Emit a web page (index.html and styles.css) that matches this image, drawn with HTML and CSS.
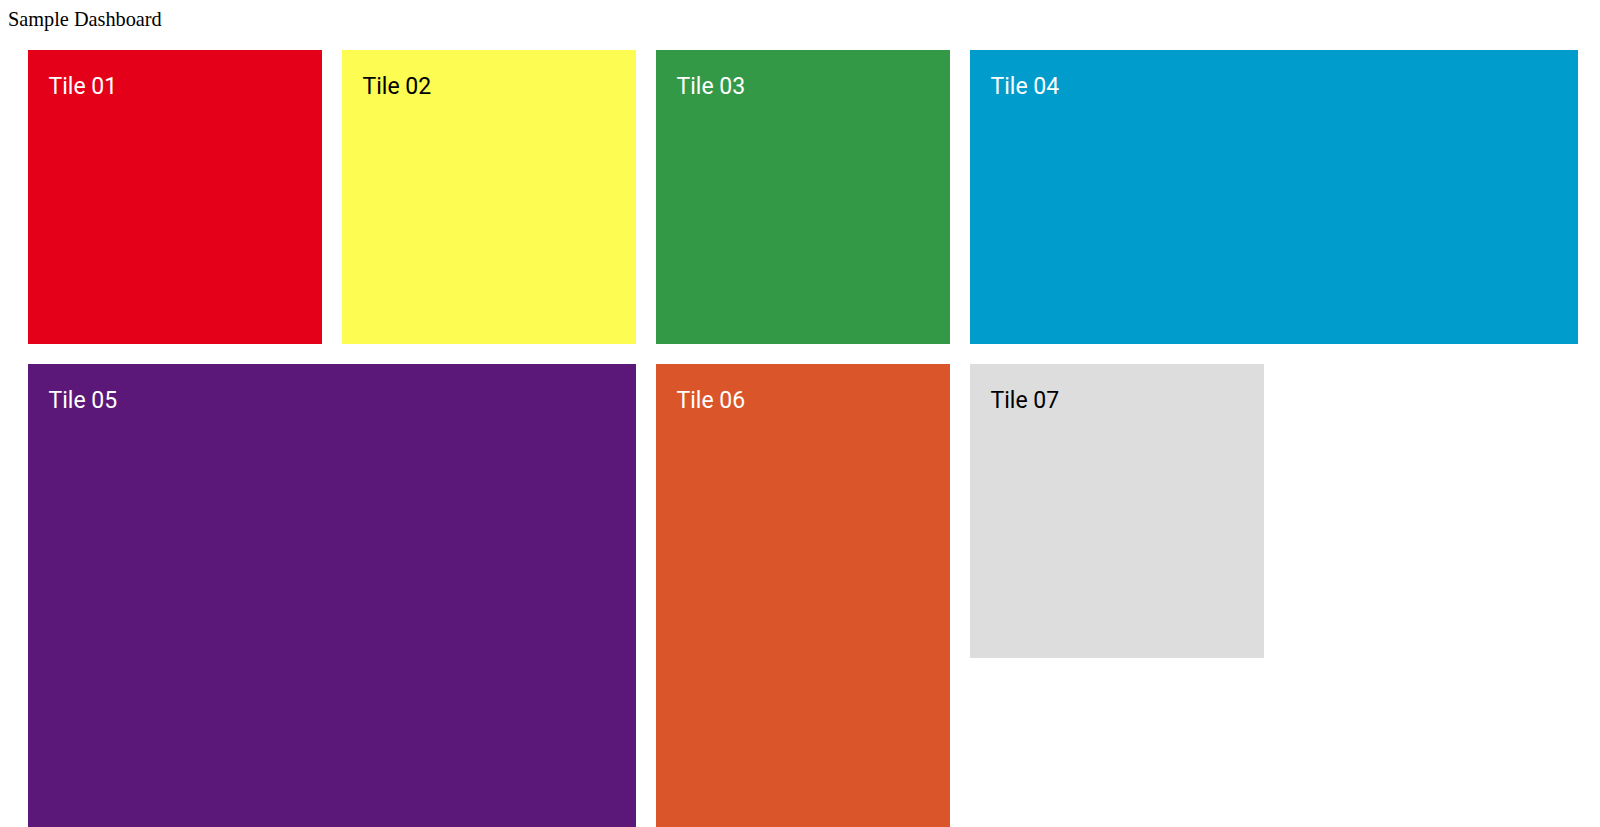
FILE: index.html
```html
<!DOCTYPE html>
<html>
<head>
<meta charset="utf-8">
<title>Sample Dashboard</title>
<link rel="stylesheet" href="styles.css">
</head>
<body>
<div class="title">Sample Dashboard</div>
<div class="dashboard">
  <div class="tile red">Tile 01</div>
  <div class="tile yellow">Tile 02</div>
  <div class="tile green">Tile 03</div>
  <div class="tile blue wide">Tile 04</div>
  <div class="tile purple big">Tile 05</div>
  <div class="tile orange tall">Tile 06</div>
  <div class="tile gray">Tile 07</div>
</div>
</body>
</html>
```

FILE: styles.css
```css
html, body {
  background: #ffffff;
}
body {
  margin: 8px;
  font-family: "Liberation Serif", "Times New Roman", serif;
  overflow: hidden;
}
.title {
  font-size: 20.3px;
  line-height: 22px;
  color: #000;
}
.dashboard {
  display: grid;
  grid-template-columns: repeat(5, 294px);
  grid-auto-rows: 294px;
  gap: 20px;
  padding: 20px 20px 20px 19.5px;
}
.tile {
  font-family: Roboto, "Liberation Sans", sans-serif;
  font-size: 23px;
  line-height: normal;
  padding: 23px 21px;
  color: #ffffff;
}
.wide { grid-column: span 2; }
.tall { grid-row: span 2; }
.big { grid-column: span 2; grid-row: span 2; }
.red { background: #e50019; }
.yellow { background: #fcfc52; color: #000; }
.green { background: #339947; }
.blue { background: #009dcc; }
.purple { background: #5c1878; }
.orange { background: #db552b; }
.gray { background: #dddddd; color: #000; }
```
